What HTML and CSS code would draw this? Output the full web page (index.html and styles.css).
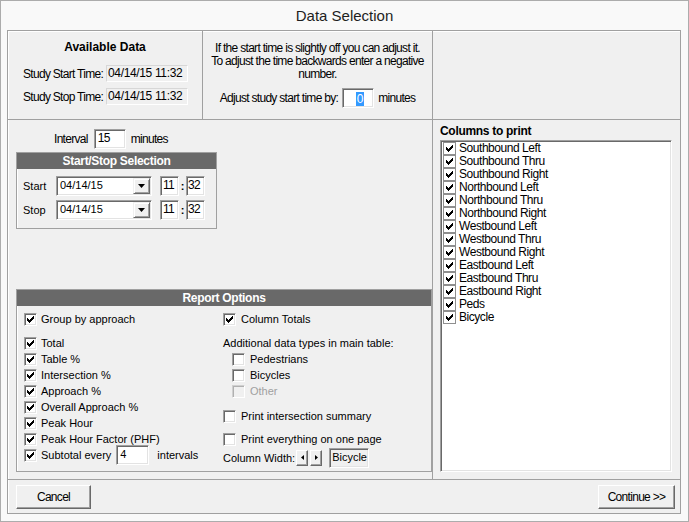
FILE: index.html
```html
<!DOCTYPE html>
<html lang="en">
<head>
<meta charset="UTF-8" />
<meta name="viewport" content="width=device-width, initial-scale=1" />
<title>Data Selection</title>
<link rel="stylesheet" href="styles.css">
</head>
<body>
<svg class="defs" width="0" height="0">
  <symbol id="tick" viewBox="0 0 7 7">
    <path d="M0 2H1V3H2V4H3V3H4V2H5V1H6V0H7V3H6V4H5V5H4V6H3V7H2V6H1V5H0Z" fill="#000"/>
  </symbol>
</svg>
<div class="window">
  <div class="titlebar">Data Selection</div>
  <div class="frame">

    <div class="top-row">
      <section class="avail">
        <h2>Available Data</h2>
        <div class="study-row"><span class="study-label nar">Study Start Time:</span><span class="ro-box nar">04/14/15 11:32</span></div>
        <div class="study-row"><span class="study-label nar">Study Stop Time:</span><span class="ro-box nar">04/14/15 11:32</span></div>
      </section>
      <section class="adjust">
        <p class="note nar">If the start time is slightly off you can adjust it.<br>To adjust the time backwards enter a negative<br>number.</p>
        <div class="adjust-row nar">
          <span>Adjust study start time by:</span>
          <span class="field adj-field"><span class="sel">0</span></span>
          <span>minutes</span>
        </div>
      </section>
      <section class="blank"></section>
    </div>

    <div class="mid-row">
      <section class="opts">
        <div class="interval-row">
          <span class="nar">Interval</span>
          <span class="field int-field nar">15</span>
          <span class="nar">minutes</span>
        </div>

        <div class="box startstop">
          <div class="box-head">Start/Stop Selection</div>
          <div class="ss-row">
            <span class="ss-label">Start</span>
            <span class="field combo">04/14/15<span class="combo-btn"><svg width="7" height="4" viewBox="0 0 7 4"><path d="M0 0h7L3.5 4z" fill="#000"/></svg></span></span>
            <span class="field time nar">11</span>
            <span class="colon">:</span>
            <span class="field time left nar">32</span>
          </div>
          <div class="ss-row">
            <span class="ss-label">Stop</span>
            <span class="field combo">04/14/15<span class="combo-btn"><svg width="7" height="4" viewBox="0 0 7 4"><path d="M0 0h7L3.5 4z" fill="#000"/></svg></span></span>
            <span class="field time nar">11</span>
            <span class="colon">:</span>
            <span class="field time left nar">32</span>
          </div>
        </div>

        <div class="box report">
          <div class="box-head">Report Options</div>
          <div class="report-body">
            <div class="rcol left-col">
              <label class="chk"><span class="cb"><svg><use href="#tick"/></svg></span>Group by approach</label>
              <label class="chk gap-top"><span class="cb"><svg><use href="#tick"/></svg></span>Total</label>
              <label class="chk"><span class="cb"><svg><use href="#tick"/></svg></span>Table %</label>
              <label class="chk"><span class="cb"><svg><use href="#tick"/></svg></span>Intersection %</label>
              <label class="chk"><span class="cb"><svg><use href="#tick"/></svg></span>Approach %</label>
              <label class="chk"><span class="cb"><svg><use href="#tick"/></svg></span>Overall Approach %</label>
              <label class="chk"><span class="cb"><svg><use href="#tick"/></svg></span>Peak Hour</label>
              <label class="chk"><span class="cb"><svg><use href="#tick"/></svg></span>Peak Hour Factor (PHF)</label>
              <label class="chk"><span class="cb"><svg><use href="#tick"/></svg></span>Subtotal every <span class="field sub-field">4</span><span class="intervals">intervals</span></label>
            </div>
            <div class="rcol right-col">
              <label class="chk"><span class="cb"><svg><use href="#tick"/></svg></span>Column Totals</label>
              <div class="chk gap-top">Additional data types in main table:</div>
              <div class="sub">
                <label class="chk"><span class="cb"></span>Pedestrians</label>
                <label class="chk"><span class="cb"></span>Bicycles</label>
                <label class="chk disabled"><span class="cb"></span>Other</label>
              </div>
              <label class="chk gap-print"><span class="cb"></span>Print intersection summary</label>
              <label class="chk gap-one"><span class="cb"></span>Print everything on one page</label>
              <div class="width-row">
                <span>Column Width:</span>
                <span class="spin">
                  <span class="spin-btn"><svg width="3" height="5" viewBox="0 0 3 5"><path d="M3 0v5L0 2.5z" fill="#000"/></svg></span>
                  <span class="spin-btn"><svg width="3" height="5" viewBox="0 0 3 5"><path d="M0 0v5l3-2.5z" fill="#000"/></svg></span>
                </span>
                <span class="field ro-field">Bicycle</span>
              </div>
            </div>
          </div>
        </div>
      </section>

      <section class="cols">
        <h3>Columns to print</h3>
        <ul class="listbox nar">
          <li><span class="lcb"><svg><use href="#tick"/></svg></span>Southbound Left</li>
          <li><span class="lcb"><svg><use href="#tick"/></svg></span>Southbound Thru</li>
          <li><span class="lcb"><svg><use href="#tick"/></svg></span>Southbound Right</li>
          <li><span class="lcb"><svg><use href="#tick"/></svg></span>Northbound Left</li>
          <li><span class="lcb"><svg><use href="#tick"/></svg></span>Northbound Thru</li>
          <li><span class="lcb"><svg><use href="#tick"/></svg></span>Northbound Right</li>
          <li><span class="lcb"><svg><use href="#tick"/></svg></span>Westbound Left</li>
          <li><span class="lcb"><svg><use href="#tick"/></svg></span>Westbound Thru</li>
          <li><span class="lcb"><svg><use href="#tick"/></svg></span>Westbound Right</li>
          <li><span class="lcb"><svg><use href="#tick"/></svg></span>Eastbound Left</li>
          <li><span class="lcb"><svg><use href="#tick"/></svg></span>Eastbound Thru</li>
          <li><span class="lcb"><svg><use href="#tick"/></svg></span>Eastbound Right</li>
          <li><span class="lcb"><svg><use href="#tick"/></svg></span>Peds</li>
          <li><span class="lcb"><svg><use href="#tick"/></svg></span>Bicycle</li>
        </ul>
      </section>
    </div>

    <div class="bottom-row">
      <button class="btn cancel nar">Cancel</button>
      <button class="btn continue nar">Continue &gt;&gt;</button>
    </div>

  </div>
</div>
</body>
</html>
```
FILE: styles.css
```css
* {
  box-sizing: border-box;
}
body {
  margin: 0;
  background: #f9f9f9;
  font-family: "Liberation Sans", Arial, sans-serif;
  font-size: 11px;
  color: #000;
}
.defs {
  position: absolute;
  width: 0;
  height: 0;
}

.nar {
  font-size: 12px;
  letter-spacing: -0.7px;
}

.window {
  width: 689px;
  height: 522px;
  border: 1px solid #acacac;
  background: #f9f9f9;
}
.titlebar {
  height: 29px;
  line-height: 29px;
  text-align: center;
  font-size: 15px;
  color: #1e1e1e;
}
.frame {
  margin-left: 6px;
  width: 674px;
  height: 484px;
  border: 1px solid #a0a0a0;
  box-shadow: inset 1px 1px 0 #fff;
  background: #f0f0f0;
  display: flex;
  flex-direction: column;
}

/* Top row */
.top-row {
  height: 89px;
  display: flex;
  border-bottom: 1px solid #a0a0a0;
}
.avail {
  width: 195px;
  border-right: 1px solid #a0a0a0;
  padding: 9px 0 0 15px;
}
.avail h2 {
  margin: 0 0 11px -15px;
  font-size: 12px;
  line-height: 14px;
  text-align: center;
}
.study-row {
  display: flex;
  align-items: center;
  height: 17px;
  margin-bottom: 6px;
}
.study-label {
  width: 83px;
  white-space: nowrap;
}
.ro-box {
  width: 82px;
  height: 17px;
  line-height: 15px;
  padding-left: 1px;
  border: 1px solid #d7d7d7;
  border-right-color: #fff;
  border-bottom-color: #fff;
  letter-spacing: -0.35px;
}
.adjust {
  width: 230px;
  border-right: 1px solid #a0a0a0;
  padding-top: 11px;
  text-align: center;
}
.note {
  margin: 0;
  line-height: 13px;
}
.adjust-row {
  margin-top: 7px;
  display: flex;
  align-items: center;
  justify-content: center;
  gap: 4px;
}
.adj-field {
  width: 32px;
  padding: 2px 0 0 2px;
}
.sel {
  background: #3399ff;
  color: #fff;
  padding: 0 1px;
  line-height: 14px;
  display: inline-block;
}
.blank {
  flex: 1;
}

/* Shared sunken field */
.field {
  display: inline-block;
  height: 20px;
  line-height: 16px;
  padding-left: 3px;
  background: #fff;
  border: 1px solid;
  border-color: #a0a0a0 #fff #fff #a0a0a0;
  box-shadow: inset 1px 1px 0 #696969, inset -1px -1px 0 #e3e3e3;
  white-space: nowrap;
}

/* Middle row */
.mid-row {
  height: 360px;
  display: flex;
  border-bottom: 1px solid #a0a0a0;
}
.opts {
  width: 425px;
  border-right: 1px solid #a0a0a0;
  padding: 8px 0 0 8px;
}
.interval-row {
  height: 21px;
  display: flex;
  align-items: center;
  padding-left: 38px;
  gap: 5px;
}
.int-field {
  width: 32px;
  margin-left: 1px;
}

.box {
  border: 1px solid #a0a0a0;
  box-shadow: inset 1px 1px 0 #fff;
}
.box-head {
  height: 16px;
  line-height: 16px;
  background: #696969;
  color: #fff;
  font-weight: bold;
  font-size: 12px;
  letter-spacing: -0.3px;
  text-align: center;
}
.startstop {
  width: 201px;
  height: 77px;
  margin-top: 3px;
}
.ss-row {
  display: flex;
  align-items: center;
  height: 20px;
  margin-top: 4px;
  padding-left: 6px;
}
.startstop .box-head + .ss-row {
  margin-top: 7px;
}
.ss-label {
  width: 33px;
}
.combo {
  width: 96px;
  position: relative;
  font-size: 11px;
}
.combo-btn {
  position: absolute;
  right: 1px;
  top: 1px;
  width: 17px;
  height: 16px;
  background: #f0f0f0;
  border: 1px solid;
  border-color: #f0f0f0 #696969 #696969 #f0f0f0;
  box-shadow: inset 1px 1px 0 #fff, inset -1px -1px 0 #a0a0a0;
  display: flex;
  align-items: center;
  justify-content: center;
}
.time {
  width: 19px;
  padding-left: 2px;
  margin-left: 8px;
}
.time.left {
  margin-left: 0;
  padding-left: 1px;
}
.colon {
  width: 7px;
  text-align: center;
  font-weight: bold;
}

.report {
  width: 416px;
  height: 183px;
  margin-top: 60px;
}
.report-body {
  display: grid;
  grid-template-columns: 199px 1fr;
  padding: 5px 0 0 7px;
}
.rcol {
  display: flex;
  flex-direction: column;
}
.chk {
  height: 16px;
  display: flex;
  align-items: center;
  gap: 5px;
  white-space: nowrap;
}
.left-col .chk {
  gap: 4px;
}
.gap-top {
  margin-top: 8px;
}
.gap-print {
  margin-top: 9px;
}
.gap-one {
  margin-top: 7px;
}
.sub {
  padding-left: 9px;
}
.cb,
.lcb {
  width: 13px;
  height: 13px;
  flex: none;
  display: flex;
  align-items: center;
  justify-content: center;
  background: #fff;
}
.cb {
  border: 1px solid;
  border-color: #a0a0a0 #fff #fff #a0a0a0;
  box-shadow: inset 1px 1px 0 #696969, inset -1px -1px 0 #e3e3e3;
}
.cb svg,
.lcb svg {
  width: 7px;
  height: 7px;
  shape-rendering: crispEdges;
}
.disabled {
  color: #a0a0a0;
}
.disabled .cb {
  background: #f0f0f0;
  border-color: #d0d0d0 #fff #fff #d0d0d0;
  box-shadow: inset 1px 1px 0 #b0b0b0;
}
.sub-field {
  width: 33px;
  margin-left: 1px;
  padding-left: 3px;
}
.intervals {
  margin-left: 4px;
}
.width-row {
  height: 21px;
  display: flex;
  align-items: center;
}
.spin {
  display: flex;
  gap: 2px;
  margin-left: 1px;
}
.spin-btn {
  width: 12px;
  height: 16px;
  background: #f0f0f0;
  border: 1px solid;
  border-color: #fff #696969 #696969 #fff;
  box-shadow: inset -1px -1px 0 #a0a0a0;
  display: flex;
  align-items: center;
  justify-content: center;
}
.ro-field {
  width: 40px;
  margin-left: 7px;
  background: #f0f0f0;
  padding-left: 2px;
}

/* Columns to print */
.cols {
  flex: 1;
  padding: 5px 8px 0 7px;
}
.cols h3 {
  margin: 0 0 2px;
  font-size: 12px;
  line-height: 13px;
  letter-spacing: -0.3px;
}
.listbox {
  list-style: none;
  margin: 0;
  padding: 1px 0 0 2px;
  height: 332px;
  background: #fff;
  border: 1px solid;
  border-color: #a0a0a0 #fff #fff #a0a0a0;
  box-shadow: inset 1px 1px 0 #696969, inset -1px -1px 0 #e3e3e3;
  letter-spacing: -0.45px;
}
.listbox li {
  height: 13px;
  line-height: 13px;
  display: flex;
  align-items: center;
  gap: 3px;
}
.lcb {
  border: 1px solid #8f8f8f;
}

/* Bottom buttons */
.bottom-row {
  flex: 1;
  display: flex;
  justify-content: space-between;
  align-items: center;
  padding: 0 5px 0 8px;
}
.btn {
  height: 24px;
  font-family: "Liberation Sans", Arial, sans-serif;
  color: #000;
  background: #f0f0f0;
  border: 1px solid;
  border-color: #fff #696969 #696969 #fff;
  box-shadow: inset -1px -1px 0 #a0a0a0;
  padding: 0;
}
.cancel {
  width: 75px;
}
.continue {
  width: 77px;
}
```
